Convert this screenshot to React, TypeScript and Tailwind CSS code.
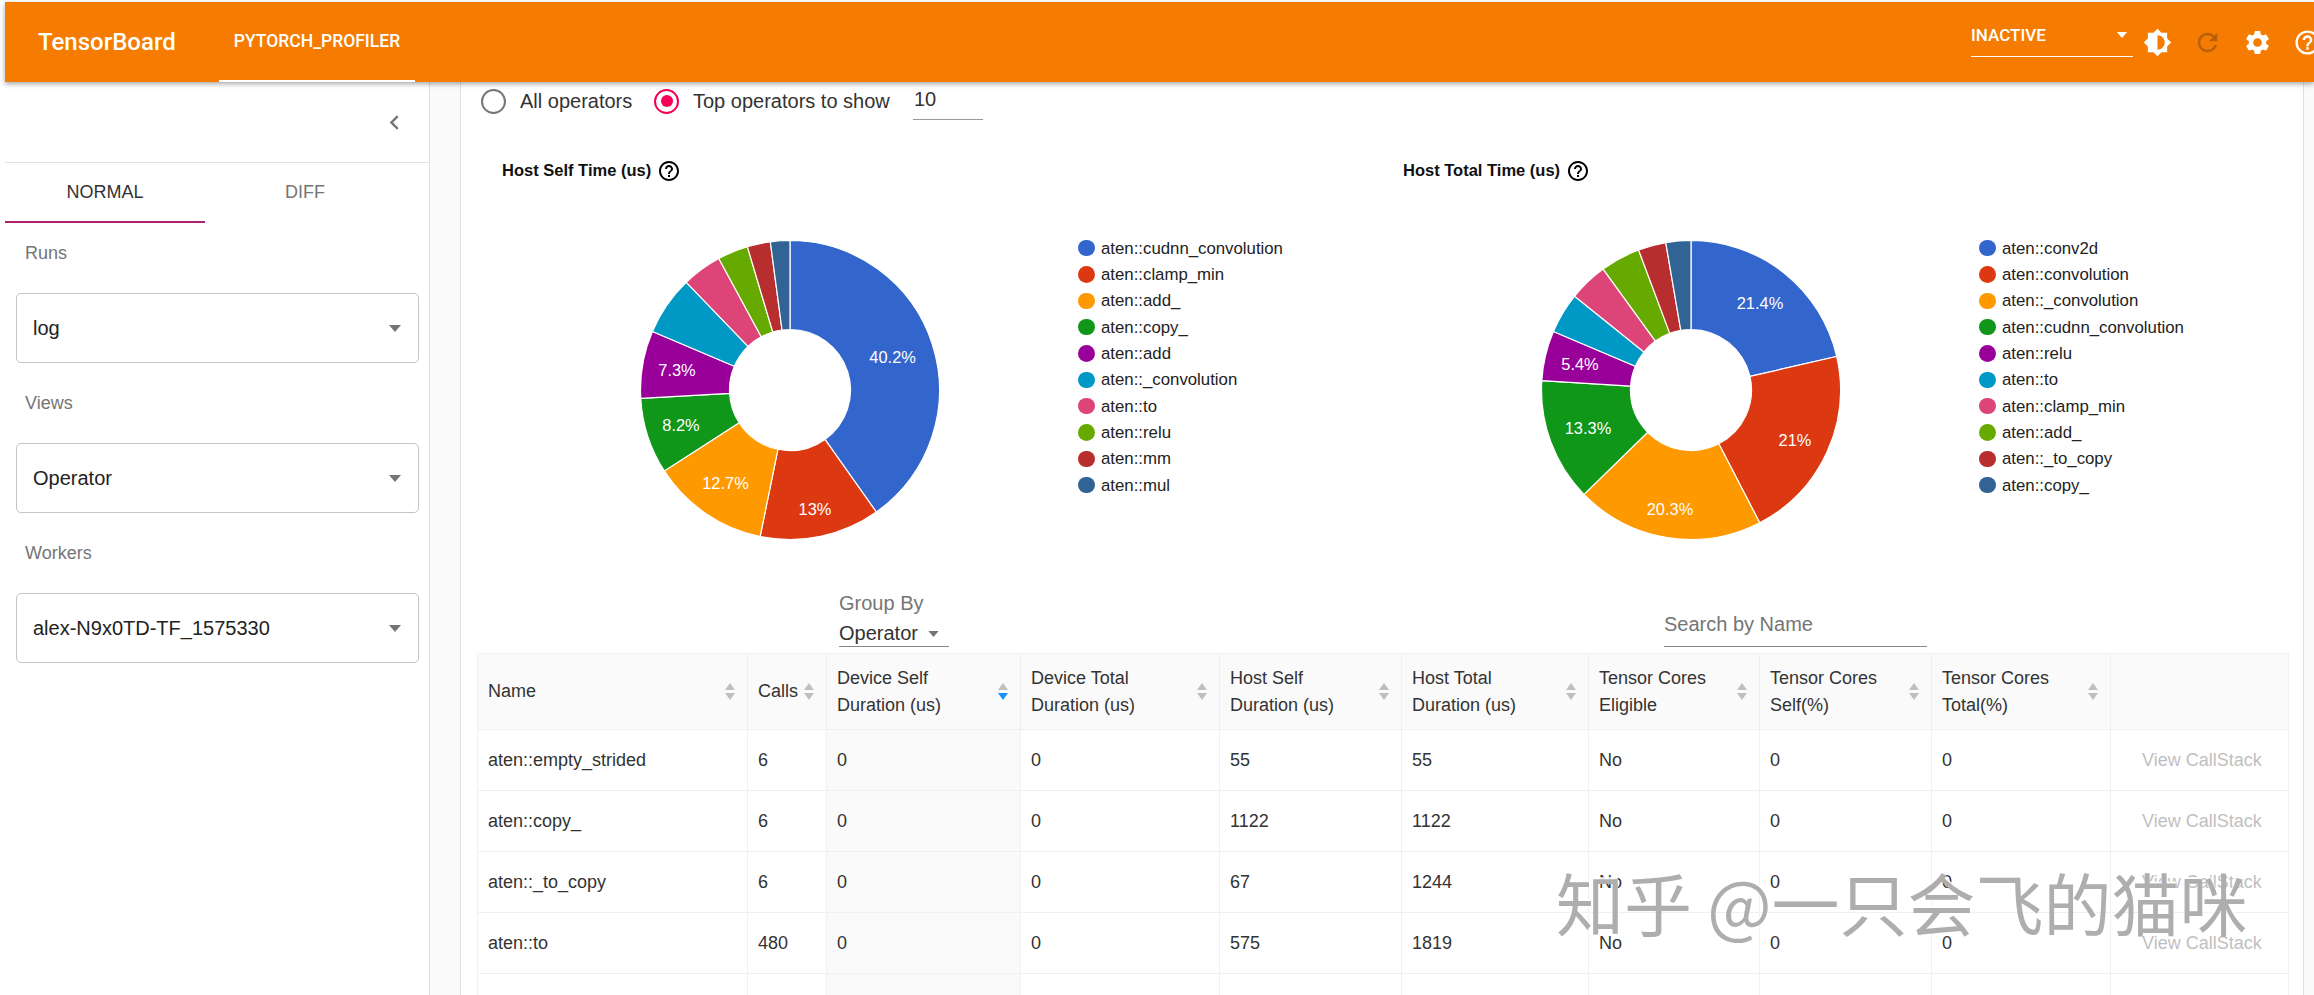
import React from "react";

const COLORS = ["#3366cc", "#dc3912", "#ff9900", "#109618", "#990099", "#0099c6", "#dd4477", "#66aa00", "#b82e2e", "#316395"];

const HELP = "M11 18h2v-2h-2v2zm1-16C6.48 2 2 6.48 2 12s4.48 10 10 10 10-4.48 10-10S17.52 2 12 2zm0 18c-4.41 0-8-3.59-8-8s3.59-8 8-8 8 3.59 8 8-3.59 8-8 8zm0-14c-2.21 0-4 1.79-4 4h2c0-1.1.9-2 2-2s2 .9 2 2c0 2-3 1.75-3 5h2c0-2.25 3-2.5 3-5 0-2.21-1.79-4-4-4z";

function Icon({ d, className, fill = "currentColor" }: { d: string; className?: string; fill?: string }) {
  return (
    <svg viewBox="0 0 24 24" className={className} fill={fill}>
      <path d={d} />
    </svg>
  );
}

function Caret({ className }: { className?: string }) {
  return (
    <svg viewBox="0 0 12 7" className={className} fill="currentColor">
      <path d="M0 0h12L6 7z" />
    </svg>
  );
}

function Donut({ values, labels }: { values: number[]; labels: { t: string; x: number; y: number }[] }) {
  const R = 149.5;
  const r = 60.5;
  let acc = 0;
  const pt = (rad: number, p: number) => {
    const a = (p / 100) * Math.PI * 2;
    return `${(150 + rad * Math.sin(a)).toFixed(2)} ${(150 - rad * Math.cos(a)).toFixed(2)}`;
  };
  return (
    <svg viewBox="0 0 300 300" className="w-[300px] h-[300px] shrink-0 mt-[5px]">
      {values.map((v, i) => {
        const s = acc;
        const e = acc + v;
        acc = e;
        const big = v > 50 ? 1 : 0;
        return (
          <path
            key={i}
            d={`M${pt(R, s)} A${R} ${R} 0 ${big} 1 ${pt(R, e)} L${pt(r, e)} A${r} ${r} 0 ${big} 0 ${pt(r, s)} Z`}
            fill={COLORS[i]}
            stroke="#fff"
            strokeWidth="1.2"
          />
        );
      })}
      {labels.map((l) => (
        <text key={l.t} x={l.x} y={l.y} fill="#fff" fontSize="16.4" textAnchor="middle" dominantBaseline="central">
          {l.t}
        </text>
      ))}
    </svg>
  );
}

function Chart({
  title,
  titleClass,
  rootClass,
  donutClass,
  values,
  labels,
  legend,
}: {
  title: string;
  titleClass: string;
  rootClass: string;
  donutClass: string;
  values: number[];
  labels: { t: string; x: number; y: number }[];
  legend: string[];
}) {
  return (
    <div className={rootClass}>
      <div className={titleClass}>
        <span className="text-[16.5px] font-bold text-[#111]">{title}</span>
        <Icon d={HELP} className="w-[24px] h-[24px] ml-[6px] mt-[2px] text-black" />
      </div>
      <div className="flex items-start mt-[35px]">
        <div className={donutClass}>
          <Donut values={values} labels={labels} />
        </div>
        <ul className="ml-[138px]">
          {legend.map((n, i) => (
            <li key={n} className="flex items-center h-[26.33px] text-[16.8px] text-[#222] whitespace-nowrap">
              <span className="w-[16.5px] h-[16.5px] rounded-full mr-[6.5px]" style={{ backgroundColor: COLORS[i] }} />
              {n}
            </li>
          ))}
        </ul>
      </div>
    </div>
  );
}

function SelectBox({ value }: { value: string }) {
  return (
    <div className="ml-[11px] w-[403px] h-[70px] border border-[#c4c4c4] rounded-[5px] flex items-center justify-between pl-[16px] pr-[17px] text-[20px] text-[#222]">
      <span>{value}</span>
      <Caret className="w-[12px] h-[7px] text-[#757575]" />
    </div>
  );
}

function SideLabel({ children }: { children: React.ReactNode }) {
  return <div className="h-[60px] mb-[10px] flex items-center pl-[20px] text-[18px] text-[#757575]">{children}</div>;
}

function SortArrows({ active }: { active?: boolean }) {
  return (
    <svg viewBox="0 0 10 18" className="w-[10px] h-[18px] shrink-0">
      <path d="M5 0l5 7H0z" fill="#bfbfbf" />
      <path d="M5 17L0 10h10z" fill={active ? "#1890ff" : "#bfbfbf"} />
    </svg>
  );
}

const COLS = [
  "w-[270px]",
  "w-[79px]",
  "w-[194px]",
  "w-[199px]",
  "w-[182px]",
  "w-[187px]",
  "w-[171px]",
  "w-[172px]",
  "w-[179px]",
  "w-[178px]",
];

const HEAD: React.ReactNode[] = [
  "Name",
  "Calls",
  <>Device Self<br />Duration (us)</>,
  <>Device Total<br />Duration (us)</>,
  <>Host Self<br />Duration (us)</>,
  <>Host Total<br />Duration (us)</>,
  <>Tensor Cores<br />Eligible</>,
  <>Tensor Cores<br />Self(%)</>,
  <>Tensor Cores<br />Total(%)</>,
];

const ROWS = [
  ["aten::empty_strided", "6", "0", "0", "55", "55", "No", "0", "0"],
  ["aten::copy_", "6", "0", "0", "1122", "1122", "No", "0", "0"],
  ["aten::_to_copy", "6", "0", "0", "67", "1244", "No", "0", "0"],
  ["aten::to", "480", "0", "0", "575", "1819", "No", "0", "0"],
  ["", "", "", "", "", "", "", "", ""],
];

export default function App() {
  return (
    <div className="relative w-[2314px] h-[995px] overflow-hidden bg-white pt-[2px] pl-[5px] font-['Liberation_Sans',Arial,sans-serif]">
      {/* App bar */}
      <header className="relative z-10 h-[80px] bg-[#f57c00] flex items-center text-white shadow-[0_2px_5px_rgba(0,0,0,0.35)] font-['Roboto',sans-serif]">
        <div className="ml-[33px] w-[181px] text-[24px] font-medium">TensorBoard</div>
        <div className="w-[196px] h-full flex items-center justify-center border-b-[2px] border-white text-[17.5px] font-medium pt-[1px]">
          PYTORCH_PROFILER
        </div>
        <div className="ml-auto w-[162px] h-[36px] mt-[-6px] border-b border-white flex items-start justify-between pr-[5px] text-[17px] font-medium">
          <span className="pt-[2px]">INACTIVE</span>
          <Caret className="w-[12px] h-[6px] mt-[11px] mr-[0px]" />
        </div>
        <div className="flex items-center ml-[10px] mr-[-8px] gap-[21px]">
          <Icon className="w-[29px] h-[29px]" d="M20 15.31L23.31 12 20 8.69V4h-4.69L12 .69 8.69 4H4v4.69L.69 12 4 15.31V20h4.69L12 23.31 15.31 20H20v-4.69zM12 18V6c3.31 0 6 2.69 6 6s-2.69 6-6 6z" />
          <Icon className="w-[29px] h-[29px] text-[#b85f0c]" d="M17.65 6.35C16.2 4.9 14.21 4 12 4c-4.42 0-7.99 3.58-7.99 8s3.57 8 7.99 8c3.73 0 6.84-2.55 7.73-6h-2.08c-.82 2.33-3.04 4-5.65 4-3.31 0-6-2.69-6-6s2.69-6 6-6c1.66 0 3.14.69 4.22 1.78L13 11h7V4l-2.35 2.35z" />
          <Icon className="w-[29px] h-[29px]" d="M19.14 12.94c.04-.3.06-.61.06-.94 0-.32-.02-.64-.07-.94l2.03-1.58c.18-.14.23-.41.12-.61l-1.92-3.32c-.12-.22-.37-.29-.59-.22l-2.39.96c-.5-.38-1.03-.7-1.62-.94l-.36-2.54c-.04-.24-.24-.41-.48-.41h-3.84c-.24 0-.43.17-.47.41l-.36 2.54c-.59.24-1.13.57-1.62.94l-2.39-.96c-.22-.08-.47 0-.59.22L2.74 8.87c-.12.21-.08.47.12.61l2.03 1.58c-.05.3-.09.63-.09.94s.02.64.07.94l-2.03 1.58c-.18.14-.23.41-.12.61l1.92 3.32c.12.22.37.29.59.22l2.39-.96c.5.38 1.03.7 1.62.94l.36 2.54c.05.24.24.41.48.41h3.84c.24 0 .44-.17.47-.41l.36-2.54c.59-.24 1.13-.56 1.62-.94l2.39.96c.22.08.47 0 .59-.22l1.92-3.32c.12-.22.07-.47-.12-.61l-2.01-1.58zM12 15.6c-1.98 0-3.6-1.62-3.6-3.6s1.62-3.6 3.6-3.6 3.6 1.62 3.6 3.6-1.62 3.6-3.6 3.6z" />
          <Icon className="w-[29px] h-[29px]" d={HELP} />
        </div>
      </header>

      <div className="flex h-[913px]">
        {/* Sidebar */}
        <aside className="w-[424px] shrink-0">
          <div className="h-[81px] border-b border-[#e0e0e0] flex items-center justify-end pr-[20px]">
            <Icon className="w-[29px] h-[29px] text-[#757575]" d="M15.41 7.41L14 6l-6 6 6 6 1.41-1.41L10.83 12z" />
          </div>
          <div className="flex h-[60px] text-[18px]">
            <div className="w-[200px] flex items-center justify-center border-b-[2px] border-[#ab2270] text-[#333]">NORMAL</div>
            <div className="w-[200px] flex items-center justify-center text-[#757575] pb-[2px]">DIFF</div>
          </div>
          <SideLabel>Runs</SideLabel>
          <SelectBox value="log" />
          <div className="h-[10px]" />
          <SideLabel>Views</SideLabel>
          <SelectBox value="Operator" />
          <div className="h-[10px]" />
          <SideLabel>Workers</SideLabel>
          <SelectBox value="alex-N9x0TD-TF_1575330" />
        </aside>

        {/* Gutter */}
        <div className="w-[31px] shrink-0 bg-[#fafafa] border-l border-[#e0e0e0]" />

        {/* Main */}
        <main className="w-[1844px] shrink-0 border-x border-[#e0e0e0] bg-white">
          <div className="h-[38px] flex items-center pl-[20px] text-[20px] text-[#333]">
            <span className="w-[25px] h-[25px] rounded-full border-[2.5px] border-[#757575] mr-[14px]" />
            <span className="w-[134px]">All operators</span>
            <span className="w-[25px] h-[25px] rounded-full border-[2.5px] border-[#f50057] flex items-center justify-center mr-[14px]">
              <span className="w-[12px] h-[12px] rounded-full bg-[#f50057]" />
            </span>
            <span className="w-[220px]">Top operators to show</span>
            <span className="w-[70px] h-full flex items-center border-b border-[#999] pl-[1px] pb-[4px]">10</span>
          </div>

          <div className="flex h-[437px] mt-[20px] pl-[21px]">
            <Chart
              rootClass="w-[896px] shrink-0"
              title="Host Self Time (us)"
              titleClass="h-[60px] flex items-center pl-[20px]"
              donutClass="ml-[158px]"
              values={[40.2, 13, 12.7, 8.2, 7.3, 6.4, 4.3, 3.3, 2.5, 2.1]}
              labels={[
                { t: "40.2%", x: 252.6, y: 117 },
                { t: "13%", x: 175, y: 269 },
                { t: "12.7%", x: 85.5, y: 243 },
                { t: "8.2%", x: 41, y: 185 },
                { t: "7.3%", x: 37, y: 130 },
              ]}
              legend={["aten::cudnn_convolution", "aten::clamp_min", "aten::add_", "aten::copy_", "aten::add", "aten::_convolution", "aten::to", "aten::relu", "aten::mm", "aten::mul"]}
            />
            <Chart
              rootClass="w-[898px] shrink-0"
              title="Host Total Time (us)"
              titleClass="h-[60px] flex items-center pl-[25px]"
              donutClass="ml-[163px]"
              values={[21.4, 21, 20.3, 13.3, 5.4, 4.4, 4.2, 4.3, 3, 2.7]}
              labels={[
                { t: "21.4%", x: 219, y: 63 },
                { t: "21%", x: 254, y: 200 },
                { t: "20.3%", x: 129, y: 269 },
                { t: "13.3%", x: 47, y: 188 },
                { t: "5.4%", x: 39, y: 124 },
              ]}
              legend={["aten::conv2d", "aten::convolution", "aten::_convolution", "aten::cudnn_convolution", "aten::relu", "aten::to", "aten::clamp_min", "aten::add_", "aten::_to_copy", "aten::copy_"]}
            />
          </div>

          <div className="h-[76px] flex text-[20px]">
            <div className="ml-[378px] w-[110px] h-[70px] border-b border-[#888]">
              <div className="h-[42px] flex items-end pb-[1px] text-[#757575]">Group By</div>
              <div className="flex items-center text-[#333] h-[27px]">
                Operator
                <Caret className="w-[11px] h-[6px] ml-[10px] mt-[3px] text-[#757575]" />
              </div>
            </div>
            <div className="ml-[715px] w-[263px] h-[70px] border-b border-[#888] flex items-end pb-[7px] text-[#757575]">
              Search by Name
            </div>
          </div>

          <div className="ml-[16px]">
            <table className="table-fixed border-collapse w-[1811px] text-[18px] text-[#333]">
              <colgroup>
                {COLS.map((c) => (
                  <col key={c + Math.random()} className={c} />
                ))}
              </colgroup>
              <thead>
                <tr className="h-[76px] bg-[#fafafa]">
                  {HEAD.map((h, i) => (
                    <th key={i} className="border border-[#f0f0f0] font-normal text-left leading-[27px] pl-[10px] pr-[12px]">
                      <div className="flex items-center justify-between">
                        <span className="whitespace-nowrap">{h}</span>
                        <SortArrows active={i === 2} />
                      </div>
                    </th>
                  ))}
                  <th className="border border-[#f0f0f0]" />
                </tr>
              </thead>
              <tbody>
                {ROWS.map((row, r) => (
                  <tr key={r} className="h-[61px]">
                    {row.map((c, i) => (
                      <td key={i} className={i === 2 ? "border border-[#f0f0f0] pl-[10px] bg-[#fafafa]" : "border border-[#f0f0f0] pl-[10px]"}>
                        {c}
                      </td>
                    ))}
                    <td className="border border-[#f0f0f0] pl-[31px] text-[#bfbfbf] whitespace-nowrap">{r < 4 ? "View CallStack" : ""}</td>
                  </tr>
                ))}
              </tbody>
            </table>
          </div>
        </main>

        <div className="flex-1 bg-[#fafafa]" />
      </div>

      {/* Watermark */}
      <div className="absolute z-20 left-[1556px] top-[862px] text-[68px] leading-[80px] whitespace-nowrap text-[#aeaeae] font-['Noto_Sans_CJK_SC',sans-serif] [text-shadow:0_-2px_0_rgba(255,255,255,0.9)]">
        知乎 @一只会飞的猫咪
      </div>
    </div>
  );
}
